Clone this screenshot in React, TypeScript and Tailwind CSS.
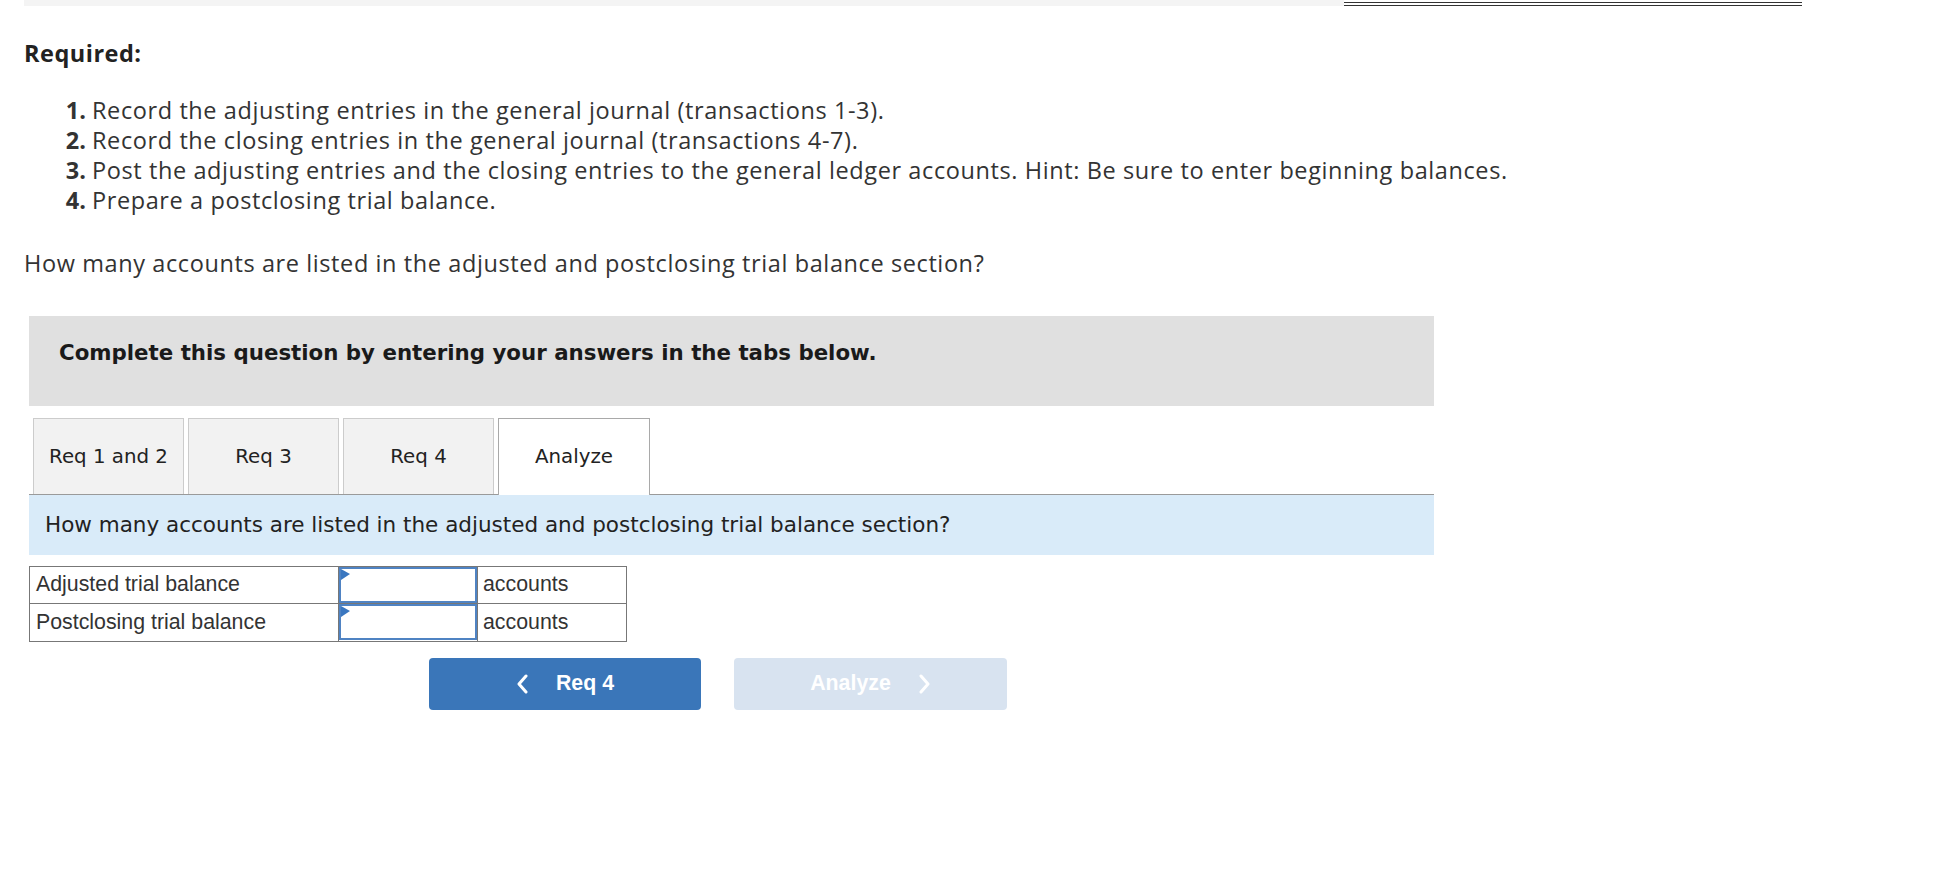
import React from "react";

const proxima = "font-['Open_Sans','Lato',sans-serif]";
const verdana = "font-['DejaVu_Sans','Verdana',sans-serif]";
const arial = "font-['Liberation_Sans','Arial',sans-serif]";

const items = [
  "Record the adjusting entries in the general journal (transactions 1-3).",
  "Record the closing entries in the general journal (transactions 4-7).",
  "Post the adjusting entries and the closing entries to the general ledger accounts. Hint: Be sure to enter beginning balances.",
  "Prepare a postclosing trial balance.",
];

function InputCell() {
  return (
    <td className="w-[139px] p-0 border border-[#777] align-top">
      <div className="relative h-[36px] border-2 border-[#4f83c3] bg-white">
        <svg className="absolute left-0 top-0" width="9" height="12" viewBox="0 0 9 12">
          <polygon points="0,0 9,5 0,11" fill="#3a77c0" />
        </svg>
      </div>
    </td>
  );
}

export default function App() {
  const tabs = ["Req 1 and 2", "Req 3", "Req 4", "Analyze"];
  return (
    <div className="w-[1936px] h-[871px] bg-white text-[#333]">
      <div className="flex items-start">
        <div className="ml-[24px] w-[1320px] h-[6px] bg-[#f4f4f4]" />
        <div className="mt-[2px] w-[458px] h-[4px] border-y border-[#333]" />
      </div>

      <div className="pl-[24px]">
        <div className={`${proxima} mt-[32px] text-[23.5px] leading-[30px] tracking-[0.5px] font-bold text-[#222]`}>Required:</div>
        <ol className={`${proxima} mt-[27px] text-[23.5px] leading-[30px] tracking-[0.6px] text-[#333]`}>
          {items.map((t, i) => (
            <li key={i} className="flex">
              <span className="w-[62px] shrink-0 text-right font-bold tracking-normal">{i + 1}.</span>
              <span className="ml-[6px]">{t}</span>
            </li>
          ))}
        </ol>
        <div className={`${proxima} mt-[33px] text-[23.5px] leading-[30px] tracking-[0.6px] text-[#333]`}>
          How many accounts are listed in the adjusted and postclosing trial balance section?
        </div>
      </div>

      <div className="ml-[29px] w-[1405px]">
        <div className={`${verdana} mt-[38px] h-[90px] bg-[#e0e0e0] flex items-center pl-[30px] pb-[16px] text-[21.33px] font-bold text-[#1a1a1a]`}>
          Complete this question by entering your answers in the tabs below.
        </div>

        <div className="mt-[12px] flex items-end gap-[4px] pl-[4px] border-b border-[#9a9a9a] h-[77px]">
          {tabs.map((t, i) => {
            const active = i === 3;
            return (
              <div
                key={t}
                className={
                  active
                    ? `${verdana} w-[152px] h-[77px] -mb-px bg-white border border-b-0 border-[#a9a9a9] flex items-center justify-center text-[19.8px] text-[#222]`
                    : `${verdana} w-[151px] h-[76px] bg-[#f2f2f2] border border-b-0 border-[#cccccc] flex items-center justify-center text-[19.8px] text-[#222]`
                }
              >
                {t}
              </div>
            );
          })}
        </div>

        <div className={`${verdana} h-[60px] bg-[#d9ebf9] flex items-center pl-[16px] text-[21.5px] text-[#222]`}>
          How many accounts are listed in the adjusted and postclosing trial balance section?
        </div>

        <table className={`${arial} mt-[11px] border-collapse text-[21.33px] text-[#333]`}>
          <tbody>
            <tr className="h-[37px]">
              <td className="w-[309px] border border-[#777] pl-[6px] leading-none">Adjusted trial balance</td>
              <InputCell />
              <td className="w-[149px] border border-[#777] pl-[5px] leading-none">accounts</td>
            </tr>
            <tr className="h-[38px]">
              <td className="w-[309px] border border-[#777] pl-[6px] leading-none">Postclosing trial balance</td>
              <InputCell />
              <td className="w-[149px] border border-[#777] pl-[5px] leading-none">accounts</td>
            </tr>
          </tbody>
        </table>
      </div>

      <div className={`${arial} mt-[16px] ml-[429px] flex gap-[33px]`}>
        <button className="w-[272px] h-[52px] rounded-[4px] bg-[#3a76b9] text-white flex items-center justify-center gap-[28px] text-[21.33px] font-bold">
          <svg width="12" height="20" viewBox="0 0 12 20" fill="none">
            <path d="M10 2 L3 10 L10 18" stroke="white" strokeWidth="3" strokeLinecap="round" strokeLinejoin="round" />
          </svg>
          <span>Req 4</span>
        </button>
        <button className="w-[273px] h-[52px] rounded-[4px] bg-[#d8e3f0] text-white flex items-center justify-center gap-[28px] text-[21.33px] font-bold">
          <span>Analyze</span>
          <svg width="12" height="20" viewBox="0 0 12 20" fill="none">
            <path d="M2 2 L9 10 L2 18" stroke="white" strokeWidth="3" strokeLinecap="round" strokeLinejoin="round" />
          </svg>
        </button>
      </div>
    </div>
  );
}
